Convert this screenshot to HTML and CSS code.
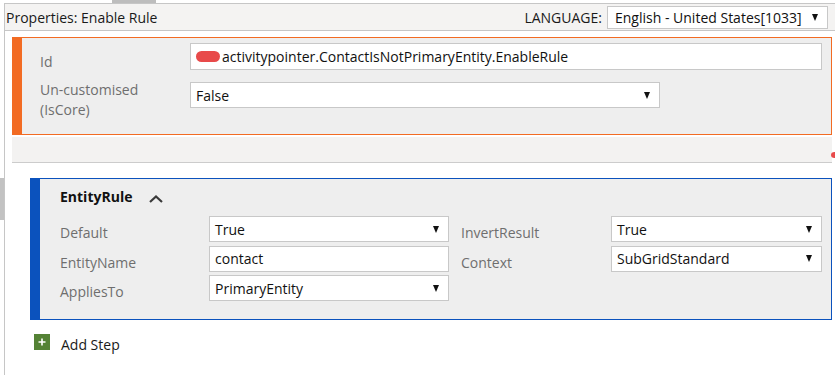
FILE: index.html
```html
<!DOCTYPE html>
<html lang="en">
<head>
<meta charset="utf-8">
<title>Properties: Enable Rule</title>
<link rel="stylesheet" href="styles.css">
</head>
<body>
<div class="topstrip"><div class="tab-stub"></div></div>
<div class="page">
  <header class="hdr">
    <span class="title">Properties: Enable Rule</span>
    <div class="lang">
      <span class="lang-label">LANGUAGE:</span>
      <div class="ctl select lang-select"><span>English - United States[1033]</span><i class="caret"></i></div>
    </div>
  </header>

  <section class="card orange">
    <div class="row row-id">
      <span class="lbl lbl-id">Id</span>
      <div class="ctl input wide"><span class="redact"></span>activitypointer.ContactIsNotPrimaryEntity.EnableRule</div>
    </div>
    <div class="row row-core">
      <span class="lbl lbl-core">Un-customised<br>(IsCore)</span>
      <div class="ctl select core-select"><span>False</span><i class="caret"></i></div>
    </div>
  </section>

  <div class="band"></div>

  <section class="card blue">
    <div class="card-head">
      <span class="head-title">EntityRule</span>
      <svg class="chev" width="16" height="10" viewBox="0 0 16 10"><polyline points="2,8 8,2.5 14,8" fill="none" stroke="#3a3a3a" stroke-width="2.2"/></svg>
    </div>
    <div class="grid">
      <span class="lbl g">Default</span>
      <div class="ctl select"><span>True</span><i class="caret"></i></div>
      <span class="lbl g">InvertResult</span>
      <div class="ctl select"><span>True</span><i class="caret"></i></div>

      <span class="lbl g">EntityName</span>
      <div class="ctl input">contact</div>
      <span class="lbl g">Context</span>
      <div class="ctl select"><span>SubGridStandard</span><i class="caret"></i></div>

      <span class="lbl g">AppliesTo</span>
      <div class="ctl select"><span>PrimaryEntity</span><i class="caret"></i></div>
    </div>
  </section>

  <div class="add-step">
    <svg class="plus" width="16" height="16" viewBox="0 0 16 16"><rect width="16" height="16" fill="#548235"/><path d="M8 4.5v7M4.5 8h7" stroke="#fff" stroke-width="1.6"/></svg>
    <span>Add Step</span>
  </div>
</div>
<div class="scroll-stub"></div>
<div class="red-dot"></div>
</body>
</html>
```
FILE: styles.css
```css
* { box-sizing: border-box; }
html, body { margin: 0; padding: 0; background: #fff; }
body {
  font-family: "Open Sans", "Noto Sans", sans-serif;
  font-size: 13px;
  color: #1e1e1e;
  width: 835px;
  height: 375px;
  overflow: hidden;
  position: relative;
}
.topstrip { height: 3px; }
.tab-stub { margin-left: 112px; width: 44px; height: 3px; background: #bdbdbd; }

.page {
  margin-left: 4px;
  border-left: 1px solid #c6c6c6;
  border-top: 1px solid #c6c6c6;
  padding: 0 3px 0 7px;
  height: 372px;
}
.hdr {
  margin: 0 -3px 0 -7px;
  height: 27px;
  background: #f4f3f2;
  border-bottom: 1px solid #c6c6c6;
  display: flex;
  align-items: center;
  justify-content: space-between;
  padding: 0 7px 0 1px;
}
.title { font-size: 14px; color: #1a1a1a; }
.lang { display: flex; align-items: center; }
.lang-label { font-size: 14px; margin-right: 5px; color: #1a1a1a; }

.ctl {
  background: #fff;
  border: 1px solid #c8c8c8;
  height: 26px;
  display: flex;
  align-items: center;
  padding: 0 9px 0 5px;
  font-size: 14px;
  color: #111;
  white-space: nowrap;
}
.select { justify-content: space-between; }
.caret {
  width: 0; height: 0;
  border-left: 3.5px solid transparent;
  border-right: 3.5px solid transparent;
  border-top: 7px solid #111;
}
.lang-select { width: 221px; height: 23px; padding-left: 7px; }

.card {
  background: #eeeeee;
  border: 1px solid;
}
.orange {
  margin-top: 6px;
  border-color: #f26b23;
  border-left-width: 10px;
  padding: 5px 9px 14px 18px;
}
.row { display: flex; align-items: flex-start; }
.lbl { color: #6e6e6e; font-size: 14px; line-height: 20px; }
.row .lbl { width: 150px; flex: none; }
.lbl-id { padding-top: 9px; }
.row-id { margin-bottom: 8px; }
.wide { flex: 1; height: 27px; }
.core-select { width: 470px; margin-top: 2px; }
.redact {
  display: inline-block;
  width: 24px;
  height: 11px;
  border-radius: 6px;
  background: #e84a4a;
  margin-right: 2px;
}

.band {
  margin-top: 2px;
  height: 26px;
  background: #f3f2f1;
  border-bottom: 1px solid #cccccc;
}

.blue {
  margin: 15px 0 0 18px;
  border-color: #0b52bd;
  border-left-width: 10px;
  padding: 7px 9px 18px 20px;
}
.card-head { display: flex; align-items: center; height: 20px; margin-bottom: 10px; }
.head-title { font-weight: 700; font-size: 14px; color: #111; }
.chev { margin-left: 16px; margin-top: 5px; }
.grid {
  display: grid;
  grid-template-columns: 149px 240px 162px 211px;
  grid-auto-rows: 26px;
  row-gap: 3.5px;
}
.grid > :nth-child(4n+3) { margin-left: 12px; }
.grid .g { padding-top: 7px; white-space: nowrap; }

.add-step {
  margin: 14px 0 0 22px;
  display: flex;
  align-items: flex-start;
  font-size: 14px;
  color: #1a1a1a;
}
.add-step span { margin-left: 11px; line-height: 20px; padding-top: 1px; }

.scroll-stub {
  position: absolute;
  left: 0; top: 178px;
  width: 4px; height: 42px;
  background: #c2c2c2;
}
.red-dot {
  position: absolute;
  left: 831px; top: 152px;
  width: 7px; height: 6px;
  border-radius: 50%;
  background: #e84a4a;
}
```
